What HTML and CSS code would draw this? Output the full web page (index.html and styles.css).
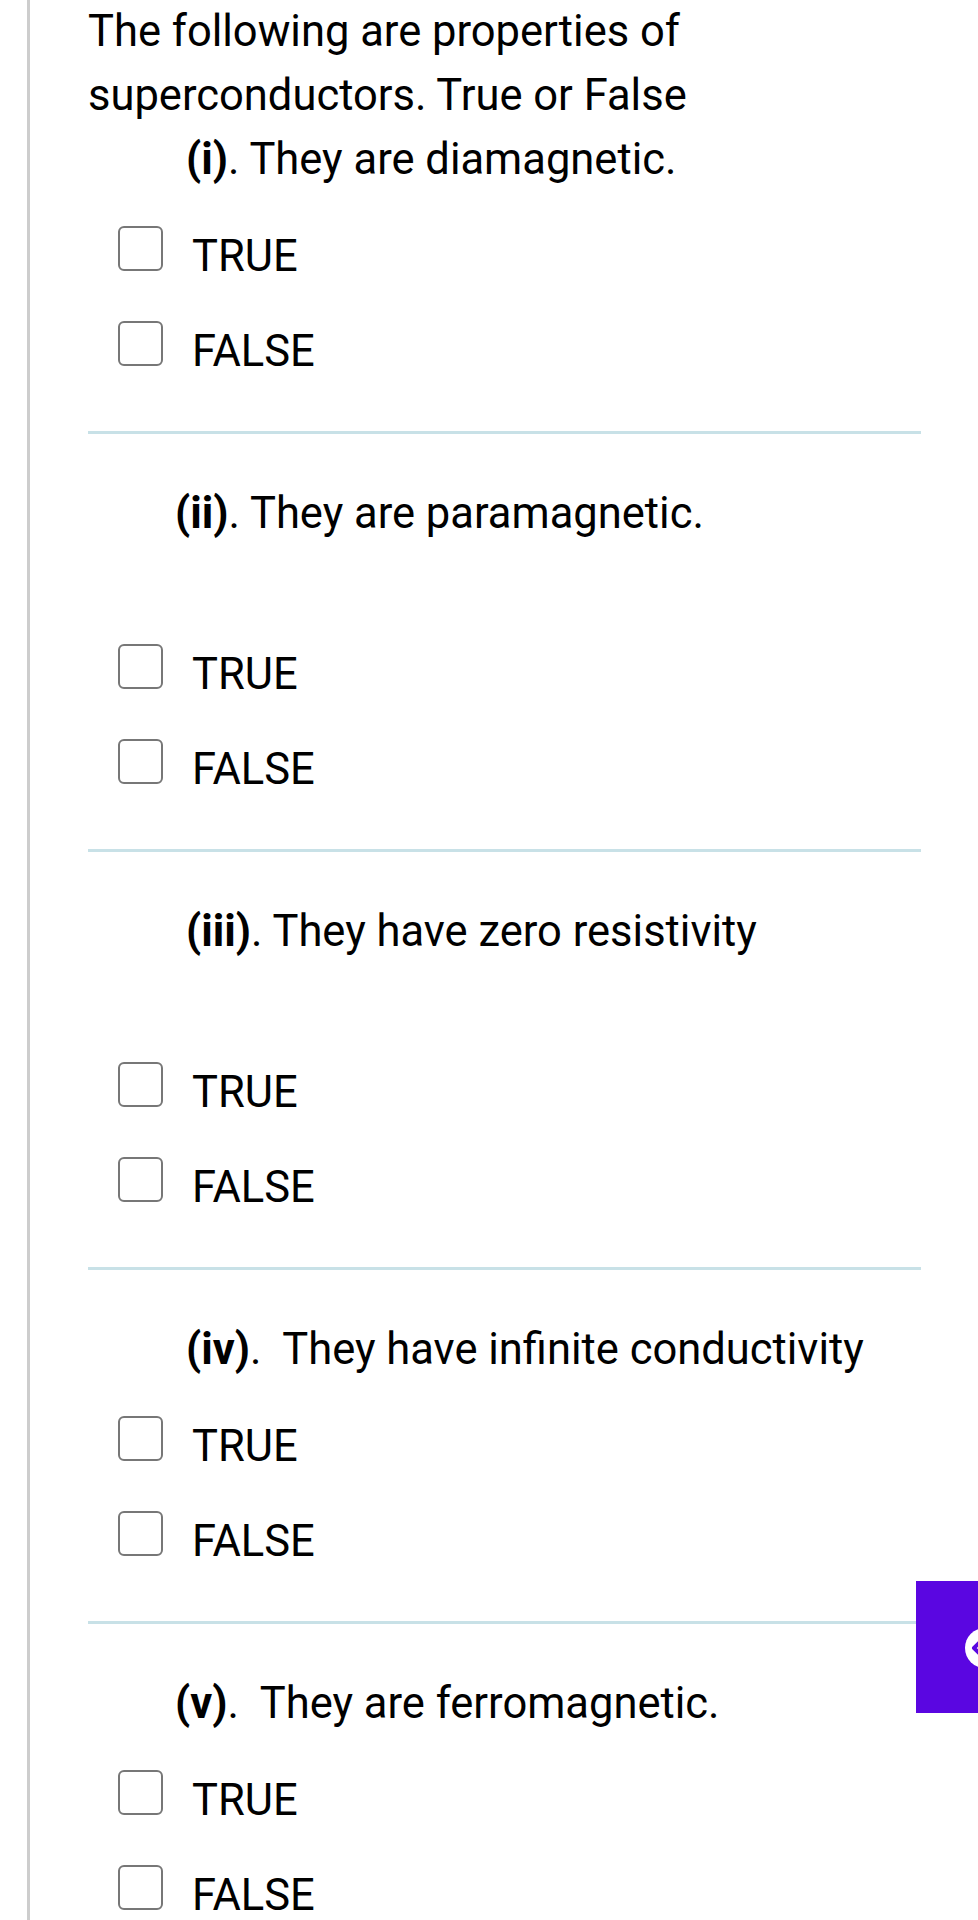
FILE: index.html
```html
<!DOCTYPE html>
<html lang="en">
<head>
  <meta charset="UTF-8">
  <title>Superconductors quiz</title>
  <link rel="stylesheet" href="styles.css">
</head>
<body>

  <div class="page">
    <div class="quiz">

      <section class="item">
        <p class="lead">The following are properties of superconductors. True or False</p>
        <p class="question indent-a"><b>(i)</b>. They are diamagnetic.</p>
        <ul class="options">
          <li class="option"><span class="box"></span>TRUE</li>
          <li class="option"><span class="box"></span>FALSE</li>
        </ul>
      </section>

      <section class="item">
        <p class="question indent-b gap-after"><b>(ii)</b>. They are paramagnetic.</p>
        <ul class="options">
          <li class="option"><span class="box"></span>TRUE</li>
          <li class="option"><span class="box"></span>FALSE</li>
        </ul>
      </section>

      <section class="item">
        <p class="question indent-a gap-after"><b>(iii)</b>. They have zero resistivity</p>
        <ul class="options">
          <li class="option"><span class="box"></span>TRUE</li>
          <li class="option"><span class="box"></span>FALSE</li>
        </ul>
      </section>

      <section class="item">
        <p class="question indent-a"><b>(iv)</b>.&nbsp; They have infinite conductivity</p>
        <ul class="options">
          <li class="option"><span class="box"></span>TRUE</li>
          <li class="option"><span class="box"></span>FALSE</li>
        </ul>
      </section>

      <section class="item">
        <p class="question indent-b"><b>(v)</b>.&nbsp; They are ferromagnetic.</p>
        <ul class="options">
          <li class="option"><span class="box"></span>TRUE</li>
          <li class="option"><span class="box"></span>FALSE</li>
        </ul>
      </section>

    </div>
  </div>

  <!-- floating side tab -->
  <div class="side-tab">
    <svg width="62" height="132" viewBox="0 0 62 132">
      <circle cx="69" cy="67" r="20" fill="#ffffff"/>
      <path d="M65 60 L58 67 L65 74" fill="none" stroke="#5a06e1" stroke-width="4" stroke-linecap="round" stroke-linejoin="round"/>
    </svg>
  </div>

</body>
</html>
```

FILE: styles.css
```css
html, body {
  margin: 0;
  padding: 0;
  background: #ffffff;
  overflow-x: hidden;
}

body {
  font-family: Roboto, 'Liberation Sans', sans-serif;
  font-size: 43.5px;
  color: #000000;
}

.page {
  margin-left: 27px;
  border-left: 3px solid #cdcdcd;
  min-height: 1920px;
}

.quiz {
  padding: 0 57px 0 58px;
}

.item {
  padding: 48px 0 32px;
  border-bottom: 3px solid #c8e1e7;
}

.item:first-child {
  padding-top: 0;
}

.item:last-child {
  border-bottom: none;
}

.lead,
.question {
  margin: 0;
  line-height: 64px;
}

.question b {
  font-weight: 700;
}

.indent-a {
  padding-left: 98px;
}

.indent-b {
  padding-left: 87px;
}

.gap-after {
  padding-bottom: 64px;
}

.options {
  list-style: none;
  margin: 17px 0 0;
  padding: 0 0 0 30px;
}

.option {
  display: flex;
  align-items: center;
  height: 95px;
  line-height: 1;
}

.box {
  width: 45px;
  height: 45px;
  box-sizing: border-box;
  border: 2.5px solid #777777;
  border-radius: 6px;
  margin-right: 29px;
  margin-bottom: 16px;
  flex-shrink: 0;
}

.side-tab {
  position: absolute;
  top: 1581px;
  right: 0;
  width: 62px;
  height: 132px;
  background: #5a06e1;
  overflow: hidden;
}

.side-tab svg {
  display: block;
}
```
